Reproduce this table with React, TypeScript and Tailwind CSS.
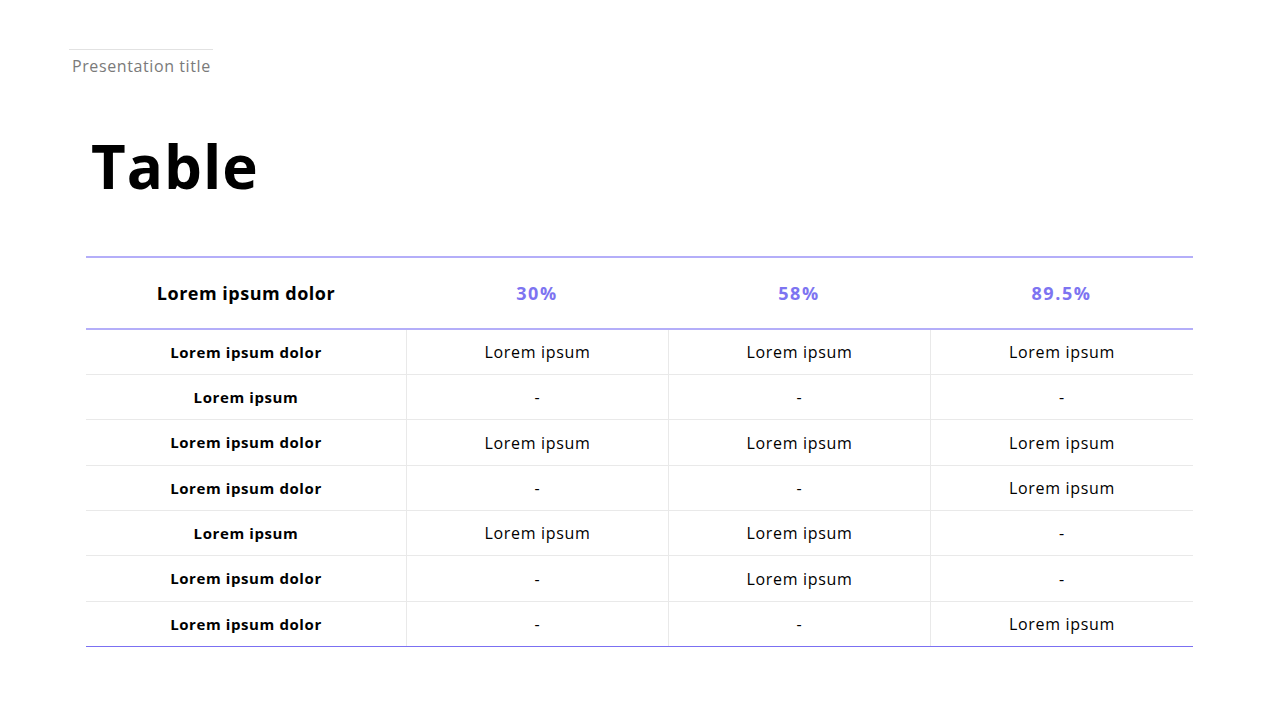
import React from 'react';

const rows: [string, string, string, string][] = [
  ['Lorem ipsum dolor', 'Lorem ipsum', 'Lorem ipsum', 'Lorem ipsum'],
  ['Lorem ipsum', '-', '-', '-'],
  ['Lorem ipsum dolor', 'Lorem ipsum', 'Lorem ipsum', 'Lorem ipsum'],
  ['Lorem ipsum dolor', '-', '-', 'Lorem ipsum'],
  ['Lorem ipsum', 'Lorem ipsum', 'Lorem ipsum', '-'],
  ['Lorem ipsum dolor', '-', 'Lorem ipsum', '-'],
  ['Lorem ipsum dolor', '-', '-', 'Lorem ipsum'],
];

// row heights taken from the slide so the grid lines land where they should
const rowH = ['h-[45px]', 'h-[45px]', 'h-[46px]', 'h-[45px]', 'h-[45px]', 'h-[46px]', 'h-[44px]'];
const colW = ['w-[262px]', 'w-[262px]', 'w-[263px]'];

export default function App() {
  return (
    <div className="w-[1280px] h-[720px] bg-white font-['Open_Sans',sans-serif] text-black">
      {/* Header label */}
      <div className="pl-[69px] pt-[49px]">
        <div className="w-[144px] h-px bg-[#e2e2e2]" />
        <div className="pt-[6px] pl-[3px] text-[16px] leading-[20px] text-[#7a7a7a] tracking-[0.6px] whitespace-nowrap">
          Presentation title
        </div>
      </div>

      <h1 className="pl-[91px] mt-[58px] text-[60px] leading-[64px] font-bold tracking-[1px]">Table</h1>

      {/* Table */}
      <div className="ml-[86px] mt-[58px] w-[1107px]">
        <div className="h-[2px] bg-[#b4aef9]" />
        <div className="flex h-[70px] items-center">
          <div className="w-[320px] text-center text-[18px] font-bold tracking-[0.5px]">Lorem ipsum dolor</div>
          {['30%', '58%', '89.5%'].map((p, i) => (
            <div key={p} className={`${colW[i]} text-center text-[18px] font-bold tracking-[1.6px] text-[#7d74f1]`}>
              {p}
            </div>
          ))}
        </div>
        <div className="h-[2px] bg-[#b4aef9]" />
        {rows.map((r, i) => (
          <div
            key={i}
            className={`flex ${rowH[i]} ${i === rows.length - 1 ? '' : 'border-b border-b-[#e9e9e9]'}`}
          >
            <div className="w-[320px] flex items-center justify-center text-[15px] font-bold tracking-[0.6px]">
              {r[0]}
            </div>
            {r.slice(1).map((c, j) => (
              <div
                key={j}
                className={`${colW[j]} flex items-center justify-center border-l border-l-[#e9e9e9] text-[16px] tracking-[0.7px]`}
              >
                {c}
              </div>
            ))}
          </div>
        ))}
        <div className="h-px bg-[#7b70f2]" />
      </div>
    </div>
  );
}
